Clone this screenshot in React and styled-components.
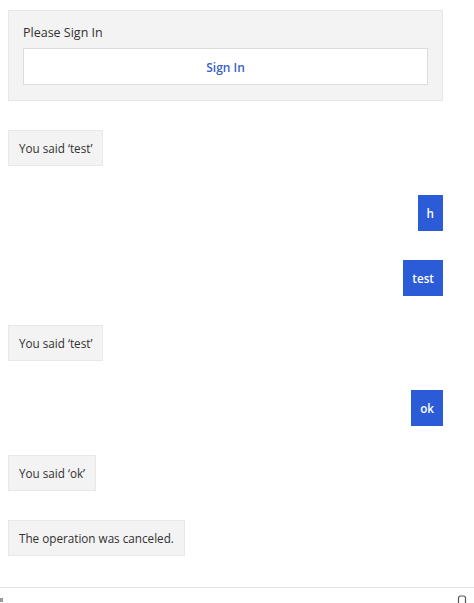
import React from "react";
import styled, { createGlobalStyle } from "styled-components";

const GlobalStyle = createGlobalStyle`
  html, body {
    margin: 0;
    padding: 0;
    background: #ffffff;
    font-family: "Open Sans", "Noto Sans", sans-serif;
    color: #323130;
  }
`;

const Page = styled.div`
  width: 474px;
  height: 603px;
  display: flex;
  flex-direction: column;
  overflow: hidden;
`;

const History = styled.div`
  flex: 1;
  display: flex;
  flex-direction: column;
  gap: 29px;
  padding: 10px 31px 0 8px;
`;

const Card = styled.div`
  background: #f3f3f3;
  border: 1px solid #e6e6e6;
  padding: 14px 14px 15px 14px;
`;

const CardTitle = styled.div`
  font-size: 12.5px;
  line-height: 18px;
  margin-bottom: 6px;
  margin-top: -1px;
`;

const CardButton = styled.button`
  display: block;
  width: 100%;
  height: 37px;
  background: #ffffff;
  border: 1px solid #dcdcdc;
  color: #3a62c7;
  font-family: "Open Sans", "Noto Sans", sans-serif;
  font-weight: 600;
  font-size: 12px;
  padding-top: 2px;
  cursor: pointer;
`;

const Row = styled.div`
  display: flex;
  justify-content: ${(p) => (p.$user ? "flex-end" : "flex-start")};
`;

const Bubble = styled.div`
  height: 36px;
  box-sizing: border-box;
  display: flex;
  align-items: center;
  padding: 0 ${(p) => (p.$user ? "8px" : "10px")};
  font-size: 11.7px;
  background: ${(p) => (p.$user ? "#2b5bd7" : "#f3f3f3")};
  color: ${(p) => (p.$user ? "#ffffff" : "#323130")};
  border: 1px solid ${(p) => (p.$user ? "#2b5bd7" : "#e8e8e8")};
  font-weight: ${(p) => (p.$user ? 600 : 400)};
`;

const Footer = styled.div`
  height: 15px;
  border-top: 1px solid #e3e3e3;
  display: flex;
  justify-content: space-between;
  align-items: flex-end;
  padding: 0 7px 0 0;
`;

const Mark = styled.div`
  width: 3px;
  height: 4px;
  background: #9a9a9a;
  margin-bottom: 1px;
`;

const messages = [
  { text: "You said \u2018test\u2019" },
  { text: "h", user: true },
  { text: "test", user: true },
  { text: "You said \u2018test\u2019" },
  { text: "ok", user: true },
  { text: "You said \u2018ok\u2019" },
  { text: "The operation was canceled." },
];

export default function App() {
  return (
    <Page>
      <GlobalStyle />
      <History>
        <Card>
          <CardTitle>Please Sign In</CardTitle>
          <CardButton>Sign In</CardButton>
        </Card>
        {messages.map((m, i) => (
          <Row key={i} $user={m.user}>
            <Bubble $user={m.user}>{m.text}</Bubble>
          </Row>
        ))}
      </History>
      <Footer>
        <Mark />
        <svg width="10" height="8" viewBox="0 0 10 8">
          <path d="M1.5 8 V3 a2 2 0 0 1 2 -2 h3 a2 2 0 0 1 2 2 V8" fill="none" stroke="#555" strokeWidth="1.2" />
        </svg>
      </Footer>
    </Page>
  );
}
